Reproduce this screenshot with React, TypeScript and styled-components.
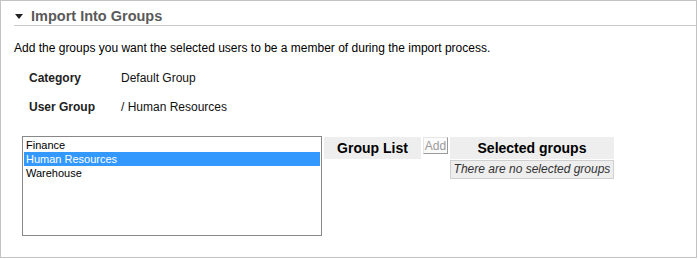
import React from "react";
import styled, { createGlobalStyle } from "styled-components";

const Global = createGlobalStyle`
  html, body { margin: 0; padding: 0; background: #fff; }
  body { font-family: "Liberation Sans", Arial, sans-serif; color: #000; }
`;

const Frame = styled.section`
  box-sizing: border-box;
  width: 697px;
  height: 258px;
  border: 1px solid #c3c3c3;
  padding: 6px 0 0 13px;
`;

const Header = styled.div`
  display: flex;
  align-items: center;
  gap: 8px;
  height: 18px;
  border-bottom: 1px solid #c8c8c8;
`;

const Arrow = styled.span`
  width: 0;
  height: 0;
  margin-left: 1px;
  border-left: 4px solid transparent;
  border-right: 4px solid transparent;
  border-top: 5px solid #222;
`;

const Title = styled.h2`
  margin: 0;
  font-size: 14.5px;
  font-weight: bold;
  color: #5a5a5a;
  line-height: 18px;
`;

const Intro = styled.p`
  margin: 15px 0 0 0;
  font-size: 12px;
  line-height: 14px;
`;

const Fields = styled.div`
  display: grid;
  grid-template-columns: 92px auto;
  row-gap: 15px;
  margin: 16px 0 0 15px;
  font-size: 12px;
  line-height: 14px;
`;

const Label = styled.span`
  font-weight: bold;
  color: #222;
`;

const Value = styled.span`
  color: #111;
`;

const Picker = styled.div`
  display: flex;
  align-items: flex-start;
  margin: 23px 0 0 8px;
`;

const ListCol = styled.div`
  margin-top: -1px;
  margin-right: 2px;
`;

const ListBox = styled.div`
  box-sizing: border-box;
  width: 300px;
  height: 100px;
  border: 1px solid #888;
  padding: 1px;
  font-size: 11px;
`;

const Option = styled.div<{ $selected?: boolean }>`
  height: 14px;
  line-height: 14px;
  padding-left: 2px;
  background: ${(p) => (p.$selected ? "#3399ff" : "transparent")};
  color: ${(p) => (p.$selected ? "#fff" : "#000")};
`;

const HeadCell = styled.div<{ $w: number }>`
  box-sizing: border-box;
  width: ${(p) => p.$w}px;
  height: 22px;
  background: #eeeeee;
  font-size: 14px;
  font-weight: bold;
  text-align: center;
  line-height: 22px;
`;

const AddButton = styled.button`
  box-sizing: border-box;
  width: 25px;
  height: 17px;
  margin: 0 2px;
  padding: 0;
  background: #fbfbfb;
  border: 1px solid;
  border-color: #e6e6e6 #9a9a9a #9a9a9a #e6e6e6;
  font-family: inherit;
  font-size: 12px;
  line-height: 14px;
  color: #9a9a9a;
`;

const SelectedCol = styled.div`
  display: flex;
  flex-direction: column;
  gap: 1px;
`;

const Empty = styled.div`
  box-sizing: border-box;
  width: 164px;
  height: 19px;
  border: 1px solid #cfcfcf;
  background: #eeeeee;
  font-size: 12px;
  font-style: italic;
  line-height: 17px;
  text-align: center;
  color: #333;
  white-space: nowrap;
`;

export default function App() {
  const groups = ["Finance", "Human Resources", "Warehouse"];
  return (
    <>
      <Global />
      <Frame>
        <Header>
          <Arrow />
          <Title>Import Into Groups</Title>
        </Header>
        <Intro>
          Add the groups you want the selected users to be a member of during the import process.
        </Intro>
        <Fields>
          <Label>Category</Label>
          <Value>Default Group</Value>
          <Label>User Group</Label>
          <Value>/ Human Resources</Value>
        </Fields>
        <Picker>
          <ListCol>
            <ListBox>
              {groups.map((g) => (
                <Option key={g} $selected={g === "Human Resources"}>
                  {g}
                </Option>
              ))}
            </ListBox>
          </ListCol>
          <HeadCell $w={97}>Group List</HeadCell>
          <AddButton disabled>Add</AddButton>
          <SelectedCol>
            <HeadCell $w={164}>Selected groups</HeadCell>
            <Empty>There are no selected groups</Empty>
          </SelectedCol>
        </Picker>
      </Frame>
    </>
  );
}
